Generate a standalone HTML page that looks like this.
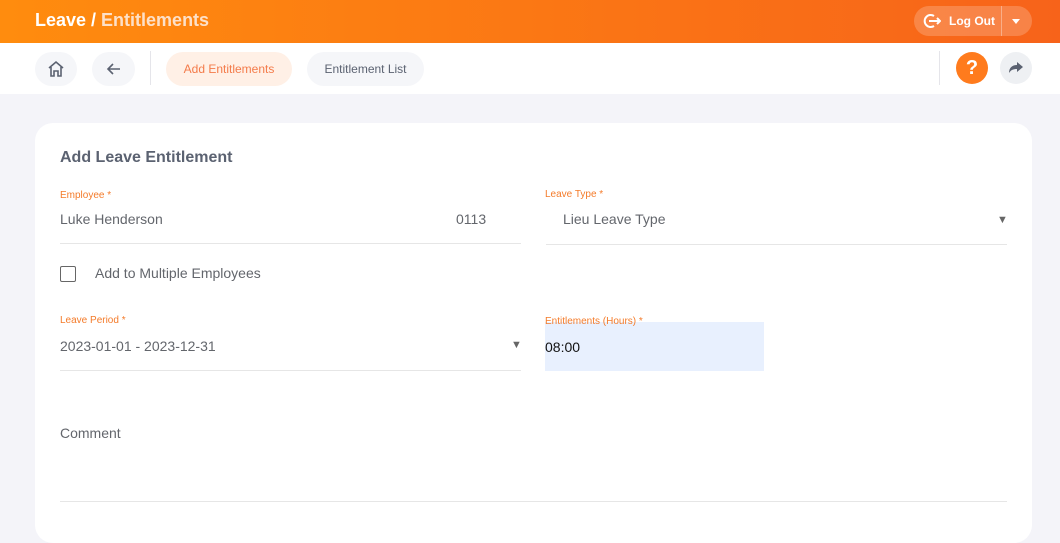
<!DOCTYPE html>
<html><head><style>
*{box-sizing:border-box;margin:0;padding:0}
body{width:1060px;height:534px;overflow:hidden;background:#f4f4f9;font-family:"Liberation Sans",sans-serif;position:relative}
.top{position:absolute;left:0;top:0;width:1060px;height:43px;background:linear-gradient(90deg,#ff8c0e,#f7631a)}
.top .t{position:absolute;left:35px;top:10px;font-size:18px;font-weight:bold;color:#fff}
.top .t span{color:#fde0c8}
.lo{position:absolute;left:914px;top:6px;width:118px;height:30px;border-radius:15px;background:rgba(255,255,255,.2)}
.lo .txt{position:absolute;left:35px;top:8px;font-size:12px;color:#fff;font-weight:bold}
.lo .sep{position:absolute;left:87px;top:0;width:1px;height:30px;background:rgba(255,255,255,.35)}
.nav{position:absolute;left:0;top:43px;width:1060px;height:51px;background:#fff}
.b{position:absolute;top:9px;height:34px;border-radius:17px;background:#f5f6f9;font-size:12px;color:#5b6271;line-height:34px;text-align:center}
.card{position:absolute;left:35px;top:123px;width:997px;height:420px;background:#fff;border-radius:18px}
.lbl{position:absolute;font-size:10px;color:#f47b2a}
.val{position:absolute;font-size:14px;color:#63666c}
.line{position:absolute;height:1px;background:#e6e6e6}
</style></head><body>
<div class="top"><div class="t">Leave / <span>Entitlements</span></div>
<div class="lo"><svg style="position:absolute;left:9px;top:7px" width="18" height="16" viewBox="0 0 18 16" fill="none" stroke="#fff" stroke-width="2"><path d="M11 3A6 6 0 1 0 11 13"/><path d="M6 8h11M14 5l3 3-3 3"/></svg><div class="txt">Log Out</div><div class="sep"></div><div style="position:absolute;left:98px;top:13px;border:4px solid transparent;border-top:5px solid #fff"></div></div></div>
<div class="nav">
<div class="b" style="left:35px;width:42px"><svg width="20" height="20" viewBox="0 0 20 20" style="margin-top:7px" fill="none" stroke="#5b6271" stroke-width="1.6"><path d="M3 9l7-6 7 6M5 8v9h3v-5h4v5h3V8"/></svg></div>
<div class="b" style="left:92px;width:43px"><svg width="16" height="16" viewBox="0 0 16 16" style="margin-top:9px" fill="none" stroke="#5b6271" stroke-width="1.6"><path d="M14 8H2M7 3L2 8l5 5"/></svg></div>
<div style="position:absolute;left:150px;top:8px;width:1px;height:34px;background:#e5e5ea"></div>
<div class="b" style="left:166px;width:126px;background:#fff0e6;color:#f47b4a">Add Entitlements</div>
<div class="b" style="left:307px;width:117px">Entitlement List</div>
<div style="position:absolute;left:939px;top:8px;width:1px;height:34px;background:#e5e5ea"></div>
<div style="position:absolute;left:956px;top:9px;width:32px;height:32px;border-radius:50%;background:#ff7b1d;color:#fff;font-weight:bold;font-size:20px;text-align:center;line-height:32px">?</div>
<div class="b" style="left:1000px;width:32px;height:32px;border-radius:50%;background:#eef0f3"><svg width="16" height="14" viewBox="0 0 16 14" style="margin-top:9px"><path d="M9 1l6 5-6 5V8C5 8 3 9 1 12 1 7 4 4 9 4z" fill="#5b6271"/></svg></div>
</div>
<div class="card">
<div style="position:absolute;left:25px;top:26px;font-size:16px;font-weight:bold;color:#5b6271">Add Leave Entitlement</div>
<div class="lbl" style="left:25px;top:67px">Employee *</div>
<div class="val" style="left:25px;top:88px">Luke Henderson</div>
<div class="val" style="left:421px;top:88px">0113</div>
<div class="line" style="left:25px;top:120px;width:461px"></div>
<div class="lbl" style="left:510px;top:66px">Leave Type *</div>
<div class="val" style="left:528px;top:88px">Lieu Leave Type</div>
<div style="position:absolute;left:962px;top:91px;font-size:11px;color:#666">▼</div>
<div class="line" style="left:511px;top:121px;width:461px"></div>
<div style="position:absolute;left:25px;top:143px;width:16px;height:16px;border:1.5px solid #666;border-radius:2px"></div>
<div class="val" style="left:60px;top:142px">Add to Multiple Employees</div>
<div class="lbl" style="left:25px;top:192px">Leave Period *</div>
<div class="val" style="left:25px;top:215px">2023-01-01 - 2023-12-31</div>
<div style="position:absolute;left:476px;top:216px;font-size:11px;color:#666">▼</div>
<div class="line" style="left:25px;top:247px;width:461px"></div>
<div style="position:absolute;left:510px;top:199px;width:219px;height:49px;background:#e8f0fe"></div>
<div class="lbl" style="left:510px;top:193px">Entitlements (Hours) *</div>
<div class="val" style="left:510px;top:216px;color:#111">08:00</div>
<div class="val" style="left:25px;top:302px">Comment</div>
<div class="line" style="left:25px;top:378px;width:947px"></div>
</div>
</body></html>
